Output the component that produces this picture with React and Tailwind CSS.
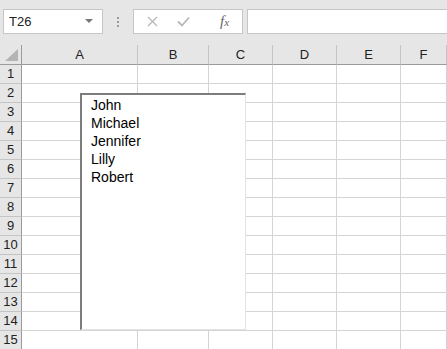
import React from "react";

const cols = ["A", "B", "C", "D", "E", "F"];
const rows = Array.from({ length: 15 }, (_, i) => i + 1);
const names = ["John", "Michael", "Jennifer", "Lilly", "Robert"];

const App = () => {
  return (
    <div
      className="relative h-[349px] w-[447px] overflow-hidden bg-white"
      style={{ fontFamily: '"Liberation Sans", Arial, sans-serif' }}
    >
      {/* Toolbar */}
      <div className="flex h-[45px] items-start bg-[#e6e6e6] pt-[9px]">
        <div className="ml-[3px] flex h-[25px] w-[100px] items-center justify-between border border-[#c6c6c6] bg-white pl-[5px] pr-[9px] text-[13px] text-[#222]">
          <span>T26</span>
          <svg width="8" height="5" viewBox="0 0 8 5">
            <path d="M0 0h8L4 4z" fill="#777" />
          </svg>
        </div>
        <div className="ml-[14px] mt-[8px] flex flex-col gap-[2px]">
          <span className="h-[2px] w-[2px] bg-[#9a9a9a]" />
          <span className="h-[2px] w-[2px] bg-[#9a9a9a]" />
          <span className="h-[2px] w-[2px] bg-[#9a9a9a]" />
        </div>
        <div className="ml-[14px] flex h-[25px] w-[110px] items-center border border-[#c6c6c6] bg-white">
          <svg className="ml-[13px]" width="11" height="11" viewBox="0 0 11 11">
            <path d="M1 1l9 9M10 1l-9 9" stroke="#b8b8b8" strokeWidth="1.3" />
          </svg>
          <svg className="ml-[19px]" width="13" height="11" viewBox="0 0 13 11">
            <path d="M1 5.5l4 4L12 1.5" stroke="#b8b8b8" strokeWidth="1.8" fill="none" />
          </svg>
          <span
            className="ml-[30px] text-[15px] italic text-[#666]"
            style={{ fontFamily: '"Liberation Serif", serif' }}
          >
            f<span className="text-[11px]">x</span>
          </span>
        </div>
        <div className="ml-[4px] h-[25px] flex-1 border border-r-0 border-[#c6c6c6] bg-white" />
      </div>

      {/* Sheet grid */}
      <div className="grid grid-cols-[22px_116px_71px_64px_64px_64px_1fr] grid-rows-[20px] auto-rows-[19px] text-[13px]">
        <div className="relative border-b border-r border-[#9b9b9b] bg-[#e6e6e6]">
          <svg className="absolute bottom-[3px] right-[3px]" width="13" height="12" viewBox="0 0 13 12">
            <path d="M13 0V12H0z" fill="#b4b4b4" />
          </svg>
        </div>
        {cols.map((c) => (
          <div
            key={c}
            className="flex items-center justify-center border-b border-r border-b-[#9b9b9b] border-r-[#c4c4c4] bg-[#e6e6e6] text-[#222]"
          >
            {c}
          </div>
        ))}
        {rows.map((r) => (
          <React.Fragment key={r}>
            <div className="flex items-center justify-center border-b border-r border-b-[#c4c4c4] border-r-[#9b9b9b] bg-[#e6e6e6] text-[#222]">
              {r}
            </div>
            {cols.map((c) => (
              <div key={c} className="border-b border-r border-[#d4d4d4]" />
            ))}
          </React.Fragment>
        ))}
      </div>

      {/* List box control floating over the sheet */}
      <div className="absolute left-[80px] top-[93px] h-[237px] w-[166px] border-b border-l-2 border-r border-t-2 border-b-[#e3e3e3] border-l-[#7d7d7d] border-r-[#e3e3e3] border-t-[#7d7d7d] bg-white pl-[9px] pt-[1px]">
        {names.map((n) => (
          <div key={n} className="h-[18px] text-[14px] leading-[18px] text-black">
            {n}
          </div>
        ))}
      </div>
    </div>
  );
};

export default App;
